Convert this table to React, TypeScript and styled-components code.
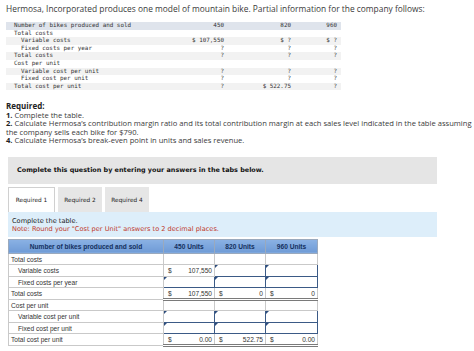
import React from "react";
import styled, { createGlobalStyle } from "styled-components";

const Global = createGlobalStyle`
  html, body { margin: 0; padding: 0; background: #fff; }
  body { font-family: "Open Sans", "Liberation Sans", sans-serif; color: #333; }
`;

const Page = styled.div`
  width: 474px;
  height: 351px;
  overflow: hidden;
  padding: 3px 0 0 6px;
  box-sizing: border-box;
`;

const Title = styled.div`
  font-size: 8.4px;
  line-height: 11px;
  color: #3a3a3a;
  white-space: nowrap;
`;

const MonoTable = styled.div`
  margin-top: 8px;
  width: 335px;
  font-family: "DejaVu Sans Mono", "Liberation Mono", monospace;
  font-size: 5.9px;
  color: #333;
`;

const MonoRow = styled.div<{ $bg: string }>`
  display: grid;
  grid-template-columns: 165px 53px 67px 46px;
  height: 7.6px;
  line-height: 7.6px;
  background: ${(p) => p.$bg};
`;

const MonoLabel = styled.span<{ $indent: number }>`
  padding-left: ${(p) => 8 + p.$indent * 7}px;
  white-space: pre;
`;

const MonoVal = styled.span`
  text-align: right;
  white-space: pre;
`;

const Required = styled.div`
  margin-top: 12px;
  font-size: 7.6px;
  line-height: 8.5px;
  color: #3a3a3a;
  white-space: nowrap;
`;

const ReqHead = styled.div`
  font-weight: 700;
  font-size: 8px;
  color: #222;
`;

const B = styled.b`
  font-weight: 700;
  color: #222;
`;

const InfoBox = styled.div`
  margin: 12px 0 0 2px;
  width: 429px;
  height: 27px;
  background: #e5e5e5;
  display: flex;
  align-items: center;
  padding-left: 9px;
  box-sizing: border-box;
  font-family: "DejaVu Sans", Verdana, sans-serif;
  font-weight: 700;
  font-size: 6.45px;
  color: #111;
`;

const Tabs = styled.div`
  margin: 3px 0 0 2px;
  display: flex;
  gap: 3px;
  align-items: flex-end;
`;

const Tab = styled.div<{ $active?: boolean }>`
  height: 25px;
  width: ${(p) => (p.$active ? 47 : 44)}px;
  box-sizing: border-box;
  display: flex;
  align-items: center;
  justify-content: center;
  font-family: "DejaVu Sans", Verdana, sans-serif;
  font-size: 5.8px;
  color: #222;
  background: ${(p) => (p.$active ? "#fff" : "#e6e6e6")};
  border: 1px solid ${(p) => (p.$active ? "#d0d0d0" : "#e6e6e6")};
  border-bottom: none;
`;

const Panel = styled.div`
  margin-left: 2px;
  width: 429px;
  height: 25px;
  background: #ddeefa;
  padding: 5px 0 0 4px;
  box-sizing: border-box;
  font-family: "DejaVu Sans", Verdana, sans-serif;
  font-size: 6.6px;
  line-height: 8px;
  color: #222;
`;

const Note = styled.div`
  color: #c0392b;
`;

const AnsTable = styled.table`
  margin: 2px 0 0 2px;
  border-collapse: collapse;
  font-family: "Liberation Sans", Arial, sans-serif;
  font-size: 6.6px;
  color: #333;
  table-layout: fixed;
`;

const Th = styled.th<{ $w: number }>`
  width: ${(p) => p.$w}px;
  height: 13px;
  padding: 0;
  background: linear-gradient(#8bb2e4, #6f9bd6);
  color: #14305e;
  font-weight: 700;
  border: 1px solid #9aa9bd;
  text-align: center;
`;

const Tr = styled.tr`
  height: 11.5px;
`;

const Td = styled.td<{ $indent?: boolean }>`
  padding: 0 0 0 ${(p) => (p.$indent ? 9 : 2)}px;
  border: 1px solid #c9c9c9;
  white-space: nowrap;
`;

const Cell = styled.td<{ $kind: "blank" | "input" | "total" | "value" }>`
  position: relative;
  padding: 0 2px 0 4px;
  border: ${(p) =>
    p.$kind === "input" ? "1.5px solid #3b5a86" : "1px solid #c9c9c9"};
  ${(p) => (p.$kind === "total" ? "border-bottom: 3px double #7a7a7a;" : "")}
`;

const Money = styled.div`
  display: flex;
  justify-content: space-between;
`;

const Marker = styled.span`
  position: absolute;
  left: 0;
  top: 0;
  width: 0;
  height: 0;
  border-top: 3px solid #2c4c7c;
  border-right: 3px solid transparent;
`;

type V = { kind: "blank" | "input" | "total" | "value"; dollar?: boolean; val?: string };

const monoRows: { label: string; indent: number; vals: string[] }[] = [
  { label: "Number of bikes produced and sold", indent: 0, vals: ["450", "820", "960"] },
  { label: "Total costs", indent: 0, vals: ["", "", ""] },
  { label: "Variable costs", indent: 1, vals: ["$ 107,550", "$ ?", "$ ?"] },
  { label: "Fixed costs per year", indent: 1, vals: ["?", "?", "?"] },
  { label: "Total costs", indent: 0, vals: ["?", "?", "?"] },
  { label: "Cost per unit", indent: 0, vals: ["", "", ""] },
  { label: "Variable cost per unit", indent: 1, vals: ["?", "?", "?"] },
  { label: "Fixed cost per unit", indent: 1, vals: ["?", "?", "?"] },
  { label: "Total cost per unit", indent: 0, vals: ["?", "$ 522.75", "?"] },
];

const inp: V = { kind: "input" };
const blank: V = { kind: "blank" };

const ansRows: { label: string; indent?: boolean; cells: V[] }[] = [
  { label: "Total costs", cells: [blank, blank, blank] },
  {
    label: "Variable costs",
    indent: true,
    cells: [{ kind: "value", dollar: true, val: "107,550" }, inp, inp],
  },
  { label: "Fixed costs per year", indent: true, cells: [inp, inp, inp] },
  {
    label: "Total costs",
    cells: [
      { kind: "total", dollar: true, val: "107,550" },
      { kind: "total", dollar: true, val: "0" },
      { kind: "total", dollar: true, val: "0" },
    ],
  },
  { label: "Cost per unit", cells: [blank, blank, blank] },
  { label: "Variable cost per unit", indent: true, cells: [inp, inp, inp] },
  { label: "Fixed cost per unit", indent: true, cells: [inp, inp, inp] },
  {
    label: "Total cost per unit",
    cells: [
      { kind: "total", dollar: true, val: "0.00" },
      { kind: "total", dollar: true, val: "522.75" },
      { kind: "total", dollar: true, val: "0.00" },
    ],
  },
];

export default function App() {
  return (
    <>
      <Global />
      <Page>
        <Title>
          Hermosa, Incorporated produces one model of mountain bike. Partial information for the company follows:
        </Title>
        <MonoTable>
          {monoRows.map((r, i) => (
            <MonoRow key={i} $bg={i === 0 ? "#dfe4ec" : i % 2 === 0 ? "#f2f2f2" : "#fff"}>
              <MonoLabel $indent={r.indent}>{r.label}</MonoLabel>
              {r.vals.map((v, j) => (
                <MonoVal key={j}>{v}</MonoVal>
              ))}
            </MonoRow>
          ))}
        </MonoTable>
        <Required>
          <ReqHead>Required:</ReqHead>
          <div>
            <B>1.</B> Complete the table.
          </div>
          <div>
            <B>2.</B> Calculate Hermosa’s contribution margin ratio and its total contribution margin at each sales level indicated in the table assuming
            <br />
            the company sells each bike for $790.
          </div>
          <div>
            <B>4.</B> Calculate Hermosa’s break-even point in units and sales revenue.
          </div>
        </Required>
        <InfoBox>Complete this question by entering your answers in the tabs below.</InfoBox>
        <Tabs>
          <Tab $active>Required 1</Tab>
          <Tab>Required 2</Tab>
          <Tab>Required 4</Tab>
        </Tabs>
        <Panel>
          <div>Complete the table.</div>
          <Note>Note: Round your "Cost per Unit" answers to 2 decimal places.</Note>
        </Panel>
        <AnsTable>
          <thead>
            <tr>
              <Th $w={154}>Number of bikes produced and sold</Th>
              <Th $w={50}>450 Units</Th>
              <Th $w={50}>820 Units</Th>
              <Th $w={51}>960 Units</Th>
            </tr>
          </thead>
          <tbody>
            {ansRows.map((r, i) => (
              <Tr key={i}>
                <Td $indent={r.indent}>{r.label}</Td>
                {r.cells.map((c, j) => (
                  <Cell key={j} $kind={c.kind}>
                    {c.kind === "input" && <Marker />}
                    {c.val !== undefined && (
                      <Money>
                        <span>{c.dollar ? "$" : ""}</span>
                        <span>{c.val}</span>
                      </Money>
                    )}
                  </Cell>
                ))}
              </Tr>
            ))}
          </tbody>
        </AnsTable>
      </Page>
    </>
  );
}
